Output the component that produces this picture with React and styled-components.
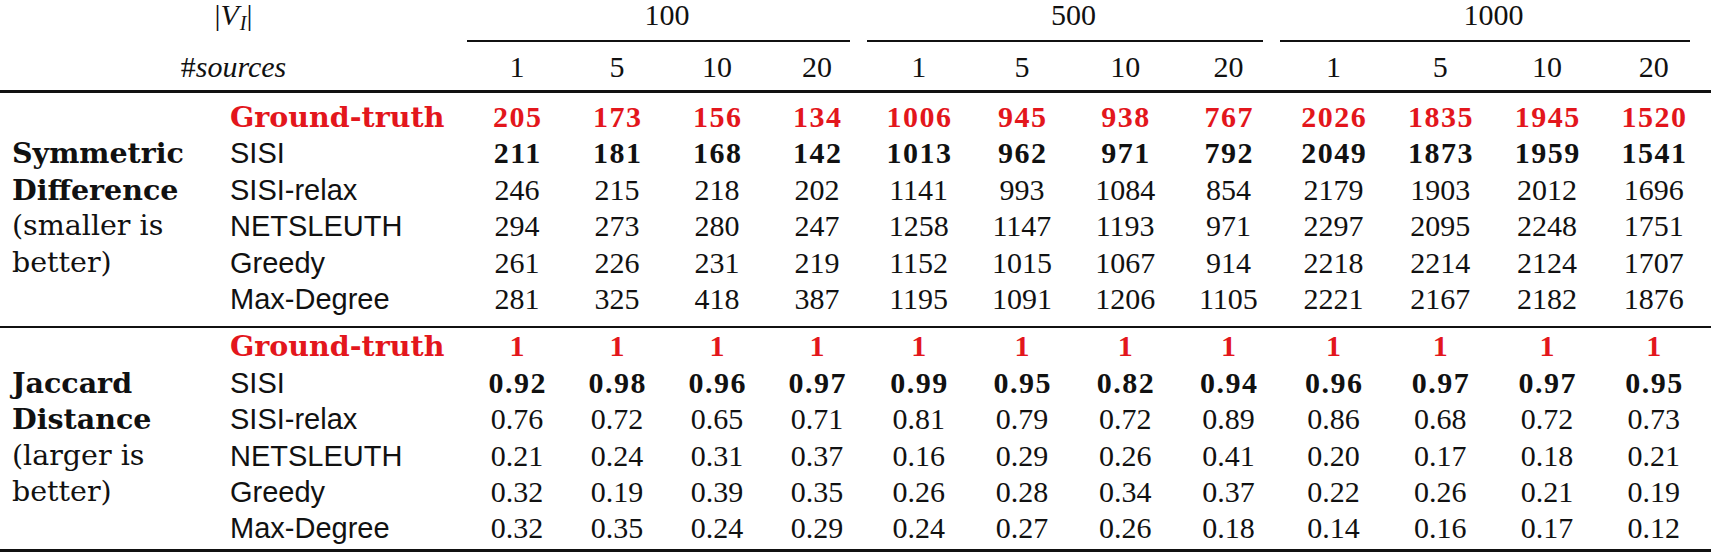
import React from 'react';
import styled, { createGlobalStyle } from 'styled-components';

const GlobalStyle = createGlobalStyle`
  html, body {
    margin: 0;
    padding: 0;
    background: #ffffff;
  }
  body {
    font-family: "Liberation Serif", "DejaVu Serif", serif;
    color: #111111;
  }
`;

// label | method | 4 x (|V_I|=100) | 4 x 500 | 4 x 1000 | trailing gap
const COLS = '217px 250px repeat(4, 100px) repeat(4, 103.25px) repeat(4, 106.75px) 4px';
const ROW = '36.4px';
const RED = '#e3161c';

const Table = styled.div`
  width: 1711px;
  display: flex;
  flex-direction: column;
`;

const HeadRow = styled.div`
  display: grid;
  grid-template-columns: ${COLS};
  height: ${props => props.h}px;
  line-height: ${props => props.h}px;
  font-size: 30px;
  text-align: center;
`;

const Corner = styled.div`
  grid-column: 1 / 3;
  font-size: 30px;

  i {
    font-style: italic;
  }
  sub {
    font-size: 20px;
    font-style: italic;
    vertical-align: -5px;
    line-height: 0;
    margin-left: 1px;
  }
`;

const GroupTitle = styled.div`
  grid-column: span 4;
`;

const HeadNum = styled.div``;

const CmidRow = styled.div`
  display: grid;
  grid-template-columns: ${COLS};
  height: 22px;
  align-items: center;
`;

const Cmid = styled.div`
  grid-column: ${props => props.from} / span 4;
  height: 1.4px;
  background: #111;
  margin-right: 17px;
`;

const Rule = styled.div`
  height: ${props => (props.heavy ? 3 : 2)}px;
  background: #111;
  margin-top: ${props => props.mt || 0}px;
`;

const Section = styled.div`
  display: grid;
  grid-template-columns: ${COLS};
  grid-auto-rows: ${ROW};
  padding-top: ${props => props.pt}px;
  padding-bottom: ${props => props.pb}px;
`;

const CatLabel = styled.div`
  grid-column: 1;
  grid-row: 2 / span 4;
  padding-left: 12px;
  font-family: "DejaVu Serif", serif;
  font-size: 28.5px;
`;

const CatLine = styled.div`
  height: ${ROW};
  line-height: ${ROW};
  font-weight: ${props => (props.bold ? 700 : 400)};
  white-space: nowrap;
`;

const Method = styled.div`
  grid-column: 2;
  padding-left: 13px;
  line-height: ${ROW};
  white-space: nowrap;
  font-family: ${props => (props.truth ? '"DejaVu Serif", serif' : '"Liberation Sans", Arial, sans-serif')};
  font-size: ${props => (props.truth ? '28.5px' : '29px')};
  font-weight: ${props => (props.truth ? 700 : 400)};
  color: ${props => (props.truth ? RED : '#111')};
`;

const Num = styled.div`
  text-align: center;
  line-height: ${ROW};
  font-size: 30px;
  font-weight: ${props => (props.kind === 'normal' ? 400 : 700)};
  letter-spacing: ${props => (props.kind === 'normal' ? '0' : '1.5px')};
  padding-left: ${props => (props.kind === 'normal' ? '0' : '1.5px')};
  color: ${props => (props.kind === 'truth' ? RED : '#111')};
`;

const sources = ['1', '5', '10', '20'];
const groups = ['100', '500', '1000'];

const sections = [
  {
    label: [
      { text: 'Symmetric', bold: true },
      { text: 'Difference', bold: true },
      { text: '(smaller is' },
      { text: 'better)' },
    ],
    rows: [
      ['Ground-truth', 'truth', ['205', '173', '156', '134', '1006', '945', '938', '767', '2026', '1835', '1945', '1520']],
      ['SISI', 'best', ['211', '181', '168', '142', '1013', '962', '971', '792', '2049', '1873', '1959', '1541']],
      ['SISI-relax', 'normal', ['246', '215', '218', '202', '1141', '993', '1084', '854', '2179', '1903', '2012', '1696']],
      ['NETSLEUTH', 'normal', ['294', '273', '280', '247', '1258', '1147', '1193', '971', '2297', '2095', '2248', '1751']],
      ['Greedy', 'normal', ['261', '226', '231', '219', '1152', '1015', '1067', '914', '2218', '2214', '2124', '1707']],
      ['Max-Degree', 'normal', ['281', '325', '418', '387', '1195', '1091', '1206', '1105', '2221', '2167', '2182', '1876']],
    ],
  },
  {
    label: [
      { text: 'Jaccard', bold: true },
      { text: 'Distance', bold: true },
      { text: '(larger is' },
      { text: 'better)' },
    ],
    rows: [
      ['Ground-truth', 'truth', Array(12).fill('1')],
      ['SISI', 'best', ['0.92', '0.98', '0.96', '0.97', '0.99', '0.95', '0.82', '0.94', '0.96', '0.97', '0.97', '0.95']],
      ['SISI-relax', 'normal', ['0.76', '0.72', '0.65', '0.71', '0.81', '0.79', '0.72', '0.89', '0.86', '0.68', '0.72', '0.73']],
      ['NETSLEUTH', 'normal', ['0.21', '0.24', '0.31', '0.37', '0.16', '0.29', '0.26', '0.41', '0.20', '0.17', '0.18', '0.21']],
      ['Greedy', 'normal', ['0.32', '0.19', '0.39', '0.35', '0.26', '0.28', '0.34', '0.37', '0.22', '0.26', '0.21', '0.19']],
      ['Max-Degree', 'normal', ['0.32', '0.35', '0.24', '0.29', '0.24', '0.27', '0.26', '0.18', '0.14', '0.16', '0.17', '0.12']],
    ],
  },
];

const ResultSection = ({ data, pt, pb }) => (
  <Section pt={pt} pb={pb}>
    <CatLabel>
      {data.label.map(line => (
        <CatLine key={line.text} bold={line.bold}>{line.text}</CatLine>
      ))}
    </CatLabel>
    {data.rows.map(([name, kind, values], r) => (
      <React.Fragment key={name}>
        <Method truth={kind === 'truth'} style={{ gridRow: r + 1 }}>{name}</Method>
        {values.map((v, i) => (
          <Num key={i} kind={kind} style={{ gridRow: r + 1, gridColumn: i + 3 }}>{v}</Num>
        ))}
      </React.Fragment>
    ))}
  </Section>
);

export default function App() {
  return (
    <>
      <GlobalStyle />
      <Table>
        <HeadRow h={30}>
          <Corner>|<i>V</i><sub>I</sub>|</Corner>
          {groups.map(g => (
            <GroupTitle key={g}>{g}</GroupTitle>
          ))}
        </HeadRow>
        <CmidRow>
          <Cmid from={3} />
          <Cmid from={7} />
          <Cmid from={11} />
        </CmidRow>
        <HeadRow h={30}>
          <Corner>#<i>sources</i></Corner>
          {groups.map(g =>
            sources.map(s => <HeadNum key={g + s}>{s}</HeadNum>)
          )}
        </HeadRow>
        <Rule heavy mt={8} />
        <ResultSection data={sections[0]} pt={6} pb={9} />
        <Rule />
        <ResultSection data={sections[1]} pt={0} pb={2} />
        <Rule heavy />
      </Table>
    </>
  );
}
